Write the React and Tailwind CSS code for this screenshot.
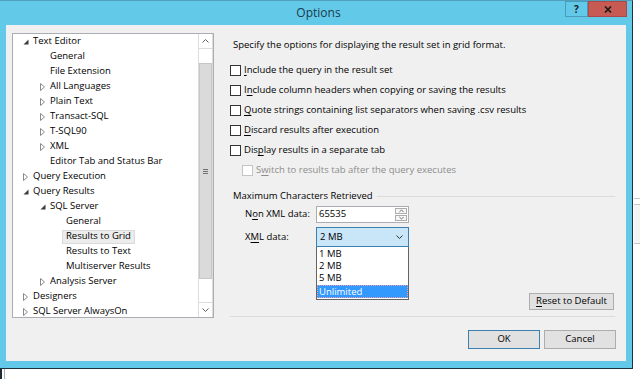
import React from "react"

const treeItems = [
    { label: "Text Editor", level: 0, arrow: "open" },
    { label: "General", level: 1 },
    { label: "File Extension", level: 1 },
    { label: "All Languages", level: 1, arrow: "closed" },
    { label: "Plain Text", level: 1, arrow: "closed" },
    { label: "Transact-SQL", level: 1, arrow: "closed" },
    { label: "T-SQL90", level: 1, arrow: "closed" },
    { label: "XML", level: 1, arrow: "closed" },
    { label: "Editor Tab and Status Bar", level: 1 },
    { label: "Query Execution", level: 0, arrow: "closed" },
    { label: "Query Results", level: 0, arrow: "open" },
    { label: "SQL Server", level: 1, arrow: "open" },
    { label: "General", level: 2 },
    { label: "Results to Grid", level: 2, selected: true },
    { label: "Results to Text", level: 2 },
    { label: "Multiserver Results", level: 2 },
    { label: "Analysis Server", level: 1, arrow: "closed" },
    { label: "Designers", level: 0, arrow: "closed" },
    { label: "SQL Server AlwaysOn", level: 0, arrow: "closed" },
]

const indents = ["pl-[9px]", "pl-[26px]", "pl-[42px]"]

const Arrow = ({ type }) => {
    if (type === "open") {
        return (
            <svg width="6" height="6" viewBox="0 0 6 6" className="ml-[1px]">
                <polygon points="5.5,0.5 5.5,5.5 0.5,5.5" fill="#3c3c3c" />
            </svg>
        )
    }
    if (type === "closed") {
        return (
            <svg width="6" height="8" viewBox="0 0 6 8" className="ml-[1px]">
                <polygon points="0.5,0.5 4.5,4 0.5,7.5" fill="#fff" stroke="#8a8a8a" strokeWidth="1" />
            </svg>
        )
    }
    return null
}

const Mn = ({ pre, u, post }) => (
    <span>
        {pre}
        <span className="underline underline-offset-2">{u}</span>
        {post}
    </span>
)

const Check = ({ pre, u, post, disabled }) => (
    <div className={`flex h-[20px] items-center ${disabled ? "pl-[12px] text-[#8d8d8d]" : ""}`}>
        <span className={`block w-[11px] h-[11px] border bg-white ${disabled ? "border-[#c4c4c4]" : "border-[#333333]"}`} />
        <span className="ml-[3px]">
            <Mn pre={pre} u={u} post={post} />
        </span>
    </div>
)

const Chevron = ({ up, color = "#606060", w = 7 }) => (
    <svg width={w} height="4" viewBox="0 0 7 4">
        <polyline points={up ? "0.5,3.5 3.5,0.5 6.5,3.5" : "0.5,0.5 3.5,3.5 6.5,0.5"} fill="none" stroke={color} strokeWidth="1" />
    </svg>
)

const Tree = () => (
    <div className="flex w-[202px] h-[285px] border border-[#abadb3] bg-white">
        <div className="flex-1 overflow-hidden">
            {treeItems.map((item, i) => (
                <div key={i} className={`flex h-[15px] items-center ${indents[item.level]}`}>
                    <span className="flex w-[11px] items-center">
                        <Arrow type={item.arrow} />
                    </span>
                    {item.selected ? (
                        <span className="-ml-[4px] px-[3px] h-[14px] flex items-center border border-[#dadada] bg-[#ececec]">
                            {item.label}
                        </span>
                    ) : (
                        <span>{item.label}</span>
                    )}
                </div>
            ))}
        </div>
        <div className="flex w-[15px] flex-col border-l border-r border-[#dcdcdc] bg-white">
            <div className="flex h-[15px] items-center justify-center border-b border-[#dcdcdc]">
                <Chevron up />
            </div>
            <div className="h-[14px]" />
            <div className="flex flex-1 items-center justify-center border border-[#c6c6c6] bg-[#dadada]">
                <div className="flex flex-col gap-[1px]">
                    <span className="block w-[5px] h-px bg-[#707070]" />
                    <span className="block w-[5px] h-px bg-[#707070]" />
                    <span className="block w-[5px] h-px bg-[#707070]" />
                </div>
            </div>
            <div className="h-[23px]" />
            <div className="flex h-[15px] items-center justify-center border-t border-[#dcdcdc]">
                <Chevron />
            </div>
        </div>
    </div>
)

const Settings = () => (
    <div className="flex w-[385px] flex-col pt-[5px] ml-[16px]">
        <div className="h-[14px] leading-[14px] pl-[3px]">
            Specify the options for displaying the result set in grid format.
        </div>
        <div className="mt-[8px]">
            <Check pre="" u="I" post="nclude the query in the result set" />
            <Check pre="I" u="n" post="clude column headers when copying or saving the results" />
            <Check pre="" u="Q" post="uote strings containing list separators when saving .csv results" />
            <Check pre="" u="D" post="iscard results after execution" />
            <Check pre="Dis" u="p" post="lay results in a separate tab" />
            <Check pre="S" u="w" post="itch to results tab after the query executes" disabled />
        </div>
        <div className="mt-[9px] flex h-[14px] items-center pl-[3px]">
            <span>Maximum Characters Retrieved</span>
            <span className="ml-[4px] block h-px flex-1 bg-[#dcdcdc]" />
        </div>
        <div className="mt-[3px] flex h-[17px] items-center pl-[15px]">
            <span className="w-[71px]">
                <Mn pre="N" u="o" post="n XML data:" />
            </span>
            <div className="flex w-[93px] h-[17px] border border-[#abadb3] bg-white">
                <div className="flex-1 pl-[2px] leading-[13px]">65535</div>
                <div className="flex w-[14px] flex-col gap-[1px] p-px">
                    <div className="flex flex-1 items-center justify-center border border-[#acacac] bg-[#f6f6f6]">
                        <Chevron up color="#404040" w={5} />
                    </div>
                    <div className="flex flex-1 items-center justify-center border border-[#acacac] bg-[#f6f6f6]">
                        <Chevron color="#404040" w={5} />
                    </div>
                </div>
            </div>
        </div>
        <div className="mt-[4px] flex h-[20px] items-center pl-[15px]">
            <span className="w-[71px]">
                <Mn pre="X" u="M" post="L data:" />
            </span>
            <div className="relative w-[93px] h-[20px]">
                <div className="flex h-[20px] items-center justify-between border border-[#3c7fb1] bg-[#c9e5f8] pl-[3px] pr-[5px]">
                    <span>2 MB</span>
                    <Chevron color="#303030" />
                </div>
                <div className="absolute left-0 top-[20px] w-[93px] border-l border-r border-b border-[#646464] bg-white pt-px pb-px">
                    <div className="h-[12px] leading-[12px] pl-[2px]">1 MB</div>
                    <div className="h-[12px] leading-[12px] pl-[2px]">2 MB</div>
                    <div className="h-[12px] leading-[12px] pl-[2px]">5 MB</div>
                    <div className="mt-px h-[13px] leading-[11px] pl-[1px] border border-dotted border-[#f0a0a0] bg-[#3399ff] text-white">
                        Unlimited
                    </div>
                </div>
            </div>
        </div>
        <div className="mt-[46px] flex justify-end pr-[1px]">
            <button className="flex w-[85px] h-[17px] items-center justify-center border border-[#adadad] bg-[#e1e1e1]">
                <Mn pre="" u="R" post="eset to Default" />
            </button>
        </div>
        <div className="mt-[6px] h-px bg-[#dcdcdc]" />
    </div>
)

export default function App() {
    return (
        <div className="relative w-[640px] h-[379px] overflow-hidden bg-white font-['Open_Sans',sans-serif] text-[9.5px] text-black">
            <div className="flex w-[633px] h-[369px] flex-col border-t border-r border-b border-t-[#4f9fbd] border-r-[#1d3340] border-b-[#1d3340] bg-[#63c9e9]">
                <div className="flex h-[24px] items-start">
                    <div className="flex-1 pl-[72px] pt-[4px] text-center text-[12px] leading-[16px] text-[#1b3a4e]">
                        Options
                    </div>
                    <div className="flex pr-[5px]">
                        <div className="flex w-[23px] h-[16px] items-center justify-center border border-[#4a9bb9] bg-[#63c9e9] text-[10px] font-bold text-[#1a1a1a]">
                            ?
                        </div>
                        <div className="flex w-[39px] h-[16px] items-center justify-center border border-[#a94a47] bg-[#c75a52]">
                            <svg width="8" height="7" viewBox="0 0 8 7">
                                <path d="M1 0.5 L7 6.5 M7 0.5 L1 6.5" stroke="#1a1a1a" strokeWidth="1.6" />
                            </svg>
                        </div>
                    </div>
                </div>
                <div className="flex flex-1 flex-col mx-[6px] mb-[7px] bg-[#f0f0f0] pt-[8px] pl-[6px] pr-[10px]">
                    <div className="flex">
                        <Tree />
                        <Settings />
                    </div>
                    <div className="mt-[12px] flex justify-end gap-[4px]">
                        <button className="w-[72px] h-[19px] border border-[#3c7fb1] bg-[#e1e1e1]">OK</button>
                        <button className="w-[72px] h-[19px] border border-[#adadad] bg-[#e1e1e1]">Cancel</button>
                    </div>
                </div>
            </div>
            <div className="absolute left-[634px] top-[198px] w-[6px] h-px bg-[#c8c8c8]" />
            <div className="absolute left-[634px] top-[204px] w-[6px] h-[40px] border-t border-b border-[#c8c8c8] bg-[#f4f4f4]" />
            <div className="absolute left-0 top-[369px] w-[2px] h-[10px] bg-[#1d2b35]" />
            <div className="absolute left-[4px] top-[369px] w-px h-[10px] bg-[#b0b0b0]" />
        </div>
    )
}
